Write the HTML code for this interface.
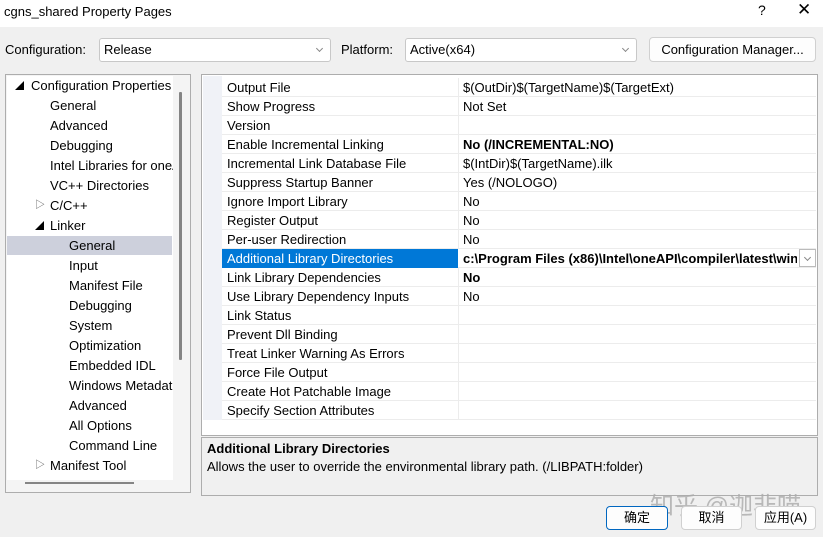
<!DOCTYPE html>
<html><head><meta charset="utf-8"><style>
*{margin:0;padding:0;box-sizing:border-box}
body{width:823px;height:537px;background:#f0f0f0;font-family:"Liberation Sans","Noto Sans CJK SC",sans-serif;font-size:13px;color:#000;position:relative;overflow:hidden}
.a{position:absolute;white-space:nowrap}
.title{left:0;top:0;width:823px;height:27px;background:#fff}
.dd{background:#fff;border:1px solid #c8c8c8;border-radius:3px;height:24px;padding:3px 0 0 4px}
.chev{position:absolute;right:8px;top:7px;width:5px;height:5px;border-right:1px solid #888;border-bottom:1px solid #888;transform:rotate(45deg)}
.btn{background:#fdfdfd;border:1px solid #d0d0d0;border-radius:4px;text-align:center}
.tree{left:5px;top:74px;width:186px;height:419px;border:1px solid #adadad;background:#f4f4f4}
.treein{left:7px;top:76px;width:166px;height:404px;background:#fff}
.t{position:absolute;height:20px;line-height:20px;white-space:nowrap}
.grid{left:201px;top:74px;width:617px;height:362px;border:1px solid #adadad;background:#fff}
.gut{left:203px;top:76px;width:19px;height:344px;background:#f0f2f7}
.row{position:absolute;left:0;width:594px;height:19px;border-bottom:1px solid #ececec;line-height:19px;white-space:nowrap}
.row .n{position:absolute;left:5px}
.row .v{position:absolute;left:241px}
.row .sep{position:absolute;left:236px;top:0;width:1px;height:19px;background:#ececec}
.desc{left:201px;top:437px;width:617px;height:59px;border:1px solid #adadad;background:#f0f0f0}
</style></head><body>
<div class="a title"></div>
<div class="a" style="left:4px;top:4px;font-size:13px">cgns_shared Property Pages</div>
<div class="a" style="left:758px;top:2px;font-size:14px">?</div>
<div class="a" style="left:797px;top:0px;font-size:17px">✕</div>

<div class="a" style="left:5px;top:42px">Configuration:</div>
<div class="a dd" style="left:99px;top:38px;width:232px">Release<span class="chev"></span></div>
<div class="a" style="left:341px;top:42px">Platform:</div>
<div class="a dd" style="left:405px;top:38px;width:232px">Active(x64)<span class="chev"></span></div>
<div class="a btn" style="left:649px;top:37px;width:167px;height:25px;line-height:23px">Configuration Manager...</div>

<div class="a tree"></div>
<div class="a treein"></div>
<div class="a" style="left:7px;top:236px;width:165px;height:19px;background:#cdd0dc"></div>
<div class="a" style="left:179px;top:92px;width:3px;height:268px;background:#858585;border-radius:1px"></div>
<div class="a" style="left:25px;top:482px;width:109px;height:2px;background:#858585"></div>
<div class="a" style="left:7px;top:76px;width:166px;height:404px;overflow:hidden">
<div class="t" style="left:8px;top:0;font-size:9px">◢</div>
<div class="t" style="left:24px;top:0">Configuration Properties</div>
<div class="t" style="left:43px;top:20px">General</div>
<div class="t" style="left:43px;top:40px">Advanced</div>
<div class="t" style="left:43px;top:60px">Debugging</div>
<div class="t" style="left:43px;top:80px">Intel Libraries for oneAPI</div>
<div class="t" style="left:43px;top:100px">VC++ Directories</div>
<div class="t" style="left:28px;top:120px;font-size:10px;color:#555">▷</div>
<div class="t" style="left:43px;top:120px">C/C++</div>
<div class="t" style="left:28px;top:140px;font-size:9px">◢</div>
<div class="t" style="left:43px;top:140px">Linker</div>
<div class="t" style="left:62px;top:160px">General</div>
<div class="t" style="left:62px;top:180px">Input</div>
<div class="t" style="left:62px;top:200px">Manifest File</div>
<div class="t" style="left:62px;top:220px">Debugging</div>
<div class="t" style="left:62px;top:240px">System</div>
<div class="t" style="left:62px;top:260px">Optimization</div>
<div class="t" style="left:62px;top:280px">Embedded IDL</div>
<div class="t" style="left:62px;top:300px">Windows Metadata</div>
<div class="t" style="left:62px;top:320px">Advanced</div>
<div class="t" style="left:62px;top:340px">All Options</div>
<div class="t" style="left:62px;top:360px">Command Line</div>
<div class="t" style="left:28px;top:380px;font-size:10px;color:#555">▷</div>
<div class="t" style="left:43px;top:380px">Manifest Tool</div>
</div>

<div class="a grid"></div>
<div class="a gut"></div>
<div class="a" style="left:222px;top:78px;width:594px;height:342px;overflow:hidden">
<div class="row" style="top:0"><span class="n">Output File</span><span class="sep"></span><span class="v">$(OutDir)$(TargetName)$(TargetExt)</span></div>
<div class="row" style="top:19px"><span class="n">Show Progress</span><span class="sep"></span><span class="v">Not Set</span></div>
<div class="row" style="top:38px"><span class="n">Version</span><span class="sep"></span></div>
<div class="row" style="top:57px"><span class="n">Enable Incremental Linking</span><span class="sep"></span><span class="v" style="font-weight:bold">No (/INCREMENTAL:NO)</span></div>
<div class="row" style="top:76px"><span class="n">Incremental Link Database File</span><span class="sep"></span><span class="v">$(IntDir)$(TargetName).ilk</span></div>
<div class="row" style="top:95px"><span class="n">Suppress Startup Banner</span><span class="sep"></span><span class="v">Yes (/NOLOGO)</span></div>
<div class="row" style="top:114px"><span class="n">Ignore Import Library</span><span class="sep"></span><span class="v">No</span></div>
<div class="row" style="top:133px"><span class="n">Register Output</span><span class="sep"></span><span class="v">No</span></div>
<div class="row" style="top:152px"><span class="n">Per-user Redirection</span><span class="sep"></span><span class="v">No</span></div>
<div class="row" style="top:171px"><span class="n" style="left:0;width:236px;height:19px;background:#0078d7;color:#fff;padding-left:5px">Additional Library Directories</span><span class="v" style="font-weight:bold;width:334px;overflow:hidden">c:\Program Files (x86)\Intel\oneAPI\compiler\latest\windows</span><span style="position:absolute;left:577px;top:0;width:17px;height:18px;border:1px solid #bbb;background:#fff"><span class="chev" style="right:5px;top:5px;width:5px;height:5px"></span></span></div>
<div class="row" style="top:190px"><span class="n">Link Library Dependencies</span><span class="sep"></span><span class="v" style="font-weight:bold">No</span></div>
<div class="row" style="top:209px"><span class="n">Use Library Dependency Inputs</span><span class="sep"></span><span class="v">No</span></div>
<div class="row" style="top:228px"><span class="n">Link Status</span><span class="sep"></span></div>
<div class="row" style="top:247px"><span class="n">Prevent Dll Binding</span><span class="sep"></span></div>
<div class="row" style="top:266px"><span class="n">Treat Linker Warning As Errors</span><span class="sep"></span></div>
<div class="row" style="top:285px"><span class="n">Force File Output</span><span class="sep"></span></div>
<div class="row" style="top:304px"><span class="n">Create Hot Patchable Image</span><span class="sep"></span></div>
<div class="row" style="top:323px"><span class="n">Specify Section Attributes</span><span class="sep"></span></div>
</div>

<div class="a desc"></div>
<div class="a" style="left:207px;top:441px;font-weight:bold">Additional Library Directories</div>
<div class="a" style="left:207px;top:459px">Allows the user to override the environmental library path. (/LIBPATH:folder)</div>

<div class="a" style="left:650px;top:486px;font-size:24px;color:rgba(170,170,170,0.8)">知乎 @迦非喵</div>
<div class="a btn" style="left:606px;top:506px;width:62px;height:24px;line-height:22px;border:1px solid #0067c0">确定</div>
<div class="a btn" style="left:681px;top:506px;width:61px;height:24px;line-height:22px">取消</div>
<div class="a btn" style="left:755px;top:506px;width:61px;height:24px;line-height:22px">应用(A)</div>
</body></html>
